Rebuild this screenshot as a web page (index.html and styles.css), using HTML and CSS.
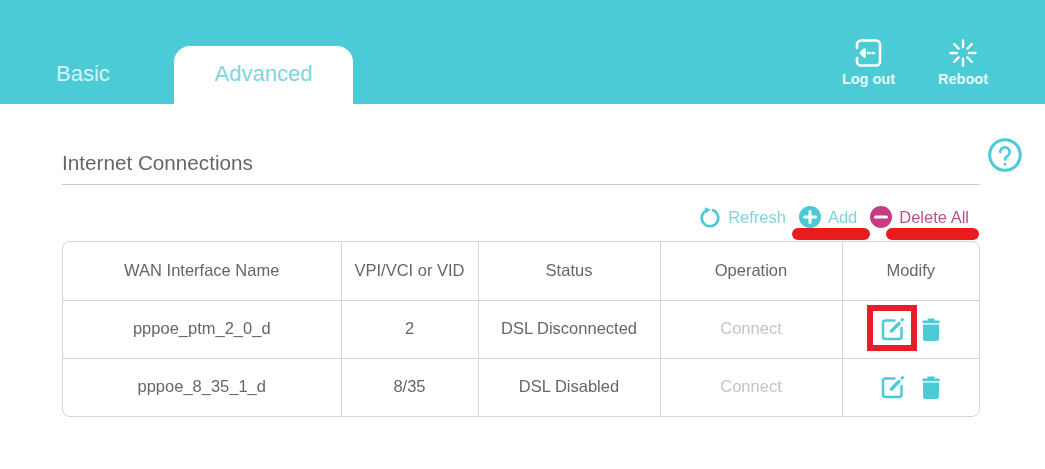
FILE: index.html
```html
<!DOCTYPE html>
<html lang="en">
<head>
<meta charset="utf-8">
<title>Internet Connections</title>
<link rel="stylesheet" href="styles.css">
</head>
<body>
<header class="top">
  <nav class="tabs">
    <a class="tab">Basic</a>
    <a class="tab tab-active">Advanced</a>
  </nav>
  <div class="actions">
    <a class="action action-logout">
      <svg class="action-icon" width="28" height="28" viewBox="0 0 28 28" fill="none" stroke="#fff" stroke-width="2.600" stroke-linecap="round" stroke-linejoin="round">
        <path d="M3 9V5.500a4 4 0 0 1 4-4h15a4 4 0 0 1 4 4v17a4 4 0 0 1-4 4H7a4 4 0 0 1-4-4V19"/>
        <path d="M10.500 10.500L7 14l3.500 3.500z" fill="#fff"/>
        <path d="M14 14h1.500M18.500 14h1.500"/>
      </svg>
      <span>Log out</span>
    </a>
    <a class="action action-reboot">
      <svg class="action-icon" width="28" height="28" viewBox="0 0 28 28" fill="none" stroke="#fff" stroke-width="2.400" stroke-linecap="round">
        <path d="M14 1.500V8M14 20v6.500M1.500 14H8M20 14h6.500M5.200 5.200l4.400 4.400M18.400 18.400l4.400 4.400M22.800 5.200l-4.400 4.400M9.600 18.400l-4.400 4.400"/>
      </svg>
      <span>Reboot</span>
    </a>
  </div>
</header>
<main class="content">
  <a class="help" aria-label="Help">
    <svg width="34" height="34" viewBox="0 0 34 34" fill="none" stroke="#4acbd6">
      <circle cx="17" cy="17" r="15.300" stroke-width="3"/>
      <path d="M12.300 14a4.700 4.700 0 1 1 7.300 3.900c-1.700 1.100-2.600 1.800-2.600 3.600" stroke-width="2.600" stroke-linecap="round"/>
      <circle cx="17" cy="26" r="1.500" fill="#4acbd6" stroke="none"/>
    </svg>
  </a>
  <h1 class="title">Internet Connections</h1>
  <div class="toolbar">
    <a class="tool tool-refresh">
      <svg width="22" height="22" viewBox="0 0 22 22" fill="none" stroke="#4acbd6" stroke-width="2.600">
        <path d="M7.500 4.400a8.300 8.300 0 1 0 6.500-.2" stroke-linecap="round"/>
        <path d="M5.500 1.200l6 2.300-4.200 3.700z" fill="#4acbd6" stroke="none"/>
      </svg>
      Refresh
    </a>
    <a class="tool tool-add">
      <svg width="22" height="22" viewBox="0 0 22 22">
        <circle cx="11" cy="11" r="11" fill="#4acbd6"/>
        <path d="M11 5.500v11M5.500 11h11" stroke="#fff" stroke-width="3" stroke-linecap="round"/>
      </svg>
      Add
    </a>
    <a class="tool tool-delete">
      <svg width="22" height="22" viewBox="0 0 22 22">
        <circle cx="11" cy="11" r="11" fill="#c63d85"/>
        <path d="M5.500 11h11" stroke="#fff" stroke-width="3" stroke-linecap="round"/>
      </svg>
      Delete All
    </a>
    <span class="mark mark-add"></span>
    <span class="mark mark-delete"></span>
  </div>
  <div class="table-wrap">
    <table class="grid">
      <colgroup>
        <col class="c1"><col class="c2"><col class="c3"><col class="c4"><col class="c5">
      </colgroup>
      <thead>
        <tr class="row-head">
          <th>WAN Interface Name</th><th>VPI/VCI or VID</th><th>Status</th><th>Operation</th><th>Modify</th>
        </tr>
      </thead>
      <tbody>
        <tr class="row-a">
          <td>pppoe_ptm_2_0_d</td><td>2</td><td>DSL Disconnected</td><td class="muted">Connect</td>
          <td>
            <div class="modify">
              <span class="edit edit-marked">
                <svg width="24" height="24" viewBox="0 0 24 24" fill="none" stroke="#4acbd6" stroke-width="2.500" stroke-linecap="round" stroke-linejoin="round">
                  <path d="M13.500 3.500H4.500a2.500 2.500 0 0 0-2.500 2.500V19.500A2.500 2.500 0 0 0 4.500 22H18a2.500 2.500 0 0 0 2.500-2.500V11"/>
                  <path d="M10.500 14L18 6.500" stroke-width="3.400"/>
                  <path d="M21.500 2.500l-.5.500" stroke-width="3"/>
                </svg>
              </span>
              <svg class="trash" width="18" height="23" viewBox="0 0 18 23">
                <path d="M.5 2.500h17v2.700H.5zM5.500.5h7v2h-7z" fill="#4acbd6"/>
                <path d="M1 6.400h16v14a2.500 2.500 0 0 1-2.500 2.500h-11A2.500 2.500 0 0 1 1 20.400z" fill="#4acbd6"/>
              </svg>
            </div>
          </td>
        </tr>
        <tr class="row-b">
          <td>pppoe_8_35_1_d</td><td>8/35</td><td>DSL Disabled</td><td class="muted">Connect</td>
          <td>
            <div class="modify">
              <span class="edit">
                <svg width="24" height="24" viewBox="0 0 24 24" fill="none" stroke="#4acbd6" stroke-width="2.500" stroke-linecap="round" stroke-linejoin="round">
                  <path d="M13.500 3.500H4.500a2.500 2.500 0 0 0-2.500 2.500V19.500A2.500 2.500 0 0 0 4.500 22H18a2.500 2.500 0 0 0 2.500-2.500V11"/>
                  <path d="M10.500 14L18 6.500" stroke-width="3.400"/>
                  <path d="M21.500 2.500l-.5.500" stroke-width="3"/>
                </svg>
              </span>
              <svg class="trash" width="18" height="23" viewBox="0 0 18 23">
                <path d="M.5 2.500h17v2.700H.5zM5.500.5h7v2h-7z" fill="#4acbd6"/>
                <path d="M1 6.400h16v14a2.500 2.500 0 0 1-2.500 2.500h-11A2.500 2.500 0 0 1 1 20.400z" fill="#4acbd6"/>
              </svg>
            </div>
          </td>
        </tr>
      </tbody>
    </table>
  </div>
</main>
</body>
</html>
```
FILE: styles.css
```css
*, *::after { box-sizing: border-box; }
html, body { margin: 0; height: 100%; }
body {
  background: #fff;
  color: #666;
  font-family: "Liberation Sans", Arial, sans-serif;
  overflow: hidden;
  filter: blur(.35px);
}
.top {
  height: 104px;
  background: #4acbd6;
  display: flex;
  justify-content: space-between;
  align-items: flex-end;
  padding-right: 57px;
}
.tabs { display: flex; align-items: flex-end; padding-left: 16px; }
.tab {
  width: 134px;
  height: 58px;
  padding: 15px 0 0 40px;
  font-size: 22px;
  line-height: 26px;
  color: #d4f5f7;
}
.tab-active {
  width: 179px;
  padding: 15px 0 0;
  margin-left: 24px;
  text-align: center;
  background: #fff;
  color: #7dd5de;
  border-radius: 16px 16px 0 0;
}
.actions { display: flex; align-self: flex-start; padding-top: 39px; gap: 43px; }
.action {
  display: flex;
  flex-direction: column;
  align-items: center;
  color: #e6f9fa;
  font-size: 14.500px;
  font-weight: 700;
  line-height: 16px;
}
.action-icon { margin-bottom: 4px; }
.content { position: relative; padding: 46px 65px 0 62px; }
.help { position: absolute; left: 988px; top: 34px; width: 34px; height: 34px; }
.help svg { display: block; }
.title {
  margin: 0;
  height: 35px;
  border-bottom: 1px solid #ccc;
  font-size: 20.700px;
  font-weight: 400;
  line-height: 26px;
  color: #666;
}
.toolbar {
  position: relative;
  height: 56px;
  display: flex;
  justify-content: flex-end;
  align-items: flex-start;
  padding: 21px 11px 0 0;
  font-size: 16.500px;
  line-height: 22px;
}
.tool { display: flex; align-items: center; gap: 7px; margin-left: 13px; color: #7fd3dc; }
.tool-delete { color: #b8528e; }
.mark {
  position: absolute;
  top: 43px;
  height: 12px;
  background: #e81c1c;
  border-radius: 6px;
}
.mark-add { left: 730px; width: 78px; }
.mark-delete { left: 824px; width: 93px; }
.table-wrap {
  border: 1px solid #d4d4d4;
  border-radius: 8px;
  overflow: hidden;
  width: 918px;
}
.grid { width: 100%; border-collapse: collapse; table-layout: fixed; font-size: 16.500px; }
.c1 { width: 278px; }
.c2 { width: 137px; }
.c3 { width: 182px; }
.c4 { width: 182px; }
.c5 { width: 137px; }
.grid th, .grid td {
  padding: 0;
  text-align: center;
  font-weight: 400;
  color: #666;
  border-right: 1px solid #d4d4d4;
  border-bottom: 1px solid #d4d4d4;
}
.grid th:last-child, .grid td:last-child { border-right: 0; }
.grid tbody tr:last-child td { border-bottom: 0; }
.grid tbody td:not(:last-child) { padding-bottom: 2px; }
.row-head { height: 58px; }
.row-a { height: 58px; }
.row-b { height: 58px; }
.grid td.muted { color: #c4c4c4; }
.modify { display: flex; justify-content: center; align-items: center; gap: 17px; padding-right: 1px; }
.edit { position: relative; display: block; width: 24px; height: 24px; }
.edit svg { display: block; }
.edit-marked::after {
  content: "";
  position: absolute;
  left: -14px;
  top: -12px;
  width: 50px;
  height: 46px;
  border: 6px solid #e81c2a;
}
.trash { display: block; }
```
